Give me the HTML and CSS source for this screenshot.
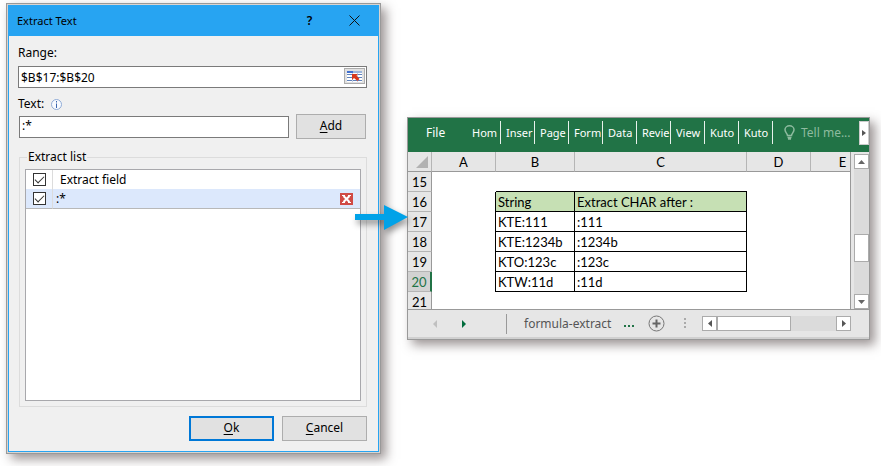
FILE: index.html
```
<!DOCTYPE html>
<html lang="en">
<head>
  <meta charset="UTF-8">
  <meta name="viewport" content="width=device-width, initial-scale=1.0">
  <title>Extract Text</title>
  <link rel="stylesheet" href="styles.css">
</head>
<body>
  <main class="page">
    <form class="dialog">
      <header class="titlebar">
        <h1>Extract Text</h1>
        <button type="button" class="title-btn help">?</button>
        <button type="button" class="title-btn" aria-label="Close">
          <svg width="11" height="11" viewBox="0 0 11 11"><path d="M.5.5l10 10M10.5.5l-10 10" stroke="#111" fill="none"/></svg>
        </button>
      </header>
      <div class="dialog-body">
        <label class="field-label" for="range">Range:</label>
        <div class="range-box">
          <input type="text" id="range" value="$B$17:$B$20">
          <button type="button" class="pick" aria-label="Select range">
            <svg width="15" height="11" viewBox="0 0 15 11">
              <path fill="#fff" d="M0 0h15v11H0z"/>
              <path fill="#3f6fd0" d="M0 0h6v2H0z"/>
              <path fill="#9db6dc" d="M6 0h9v2H6z"/>
              <path d="M0 3.5h15M0 6.5h15M0 9.5h15" stroke="#5f82bb"/>
              <path d="M5.5 2v9M10.5 2v9" stroke="#c3d0e6"/>
              <path fill="#d8381c" d="M5 3h6L9.500 4.500l3 3.500-2 2-3.500-3L5 9z"/>
            </svg>
          </button>
        </div>
        <div class="field-label text-label">
          <label for="text">Text:</label>
          <svg width="11" height="11" viewBox="0 0 11 11"><circle cx="5.500" cy="5.500" r="5" fill="#f7faff" stroke="#8fabd6"/><path d="M5 2h1v1.500H5zM5 4.500h1V9H5z" fill="#3c66ae"/></svg>
        </div>
        <div class="text-row">
          <input type="text" id="text" value=":*">
          <button type="button" class="btn add"><u>A</u>dd</button>
        </div>
        <fieldset class="group">
          <legend>Extract list</legend>
          <div class="list">
            <table class="fields">
              <tr>
                <th class="check"><input type="checkbox" aria-label="Select all" checked></th>
                <th class="name">Extract field</th>
                <th class="remove"></th>
              </tr>
              <tr class="selected">
                <td class="check"><input type="checkbox" aria-label="Select :*" checked></td>
                <td class="name">:*</td>
                <td class="remove">
                  <button type="button" aria-label="Remove">
                    <svg width="13" height="12" viewBox="0 0 13 12"><path d="M3.500 3l6 6M9.500 3l-6 6" stroke="#fff" stroke-width="2"/><path d="M2 2.500h3M8 2.500h3M2 9.500h3M8 9.500h3" stroke="#fff"/></svg>
                  </button>
                </td>
              </tr>
            </table>
          </div>
        </fieldset>
        <footer class="actions">
          <button type="button" class="btn primary"><u>O</u>k</button>
          <button type="button" class="btn"><u>C</u>ancel</button>
        </footer>
      </div>
    </form>

    <section class="excel">
      <nav class="ribbon">
        <a class="file" href="#">File</a>
        <a class="tab" href="#"><span>Hom</span></a>
        <a class="tab" href="#"><span>Inser</span></a>
        <a class="tab" href="#"><span>Page</span></a>
        <a class="tab" href="#"><span>Form</span></a>
        <a class="tab" href="#"><span>Data</span></a>
        <a class="tab" href="#"><span>Revie</span></a>
        <a class="tab" href="#"><span>View</span></a>
        <a class="tab" href="#"><span>Kuto</span></a>
        <a class="tab" href="#"><span>Kuto</span></a>
        <a class="tell" href="#">
          <svg width="11" height="15" viewBox="0 0 11 15"><path d="M3.500 10.500C3.500 8.500 1 7.500 1 4.800a4.500 4 0 0 1 9 0c0 2.700-2.500 3.700-2.500 5.700zM3.500 12.500h4M4 14h3" fill="none" stroke="#8ebb9f" stroke-width="1.500"/></svg>
          Tell me...
        </a>
        <button type="button" class="more" aria-label="More tabs"><svg width="4" height="6" viewBox="0 0 4 6"><path d="M0 0l4 3-4 3z" fill="#555"/></svg></button>
      </nav>
      <div class="sheet">
        <div class="grid">
          <table>
            <colgroup><col class="col-n"><col class="col-a"><col class="col-b"><col class="col-c"><col class="col-d"><col class="col-d"></colgroup>
            <tr class="letters"><th class="corner"><svg width="12" height="12" viewBox="0 0 12 12"><path d="M12 0v12H0z" fill="#b2b2b2"/></svg></th><th>A</th><th>B</th><th>C</th><th>D</th><th>E</th></tr>
            <tr class="above"><th>15</th><td></td><td></td><td></td><td></td><td></td></tr>
            <tr class="data head"><th>16</th><td></td><td>String</td><td>Extract CHAR after :</td><td></td><td></td></tr>
            <tr class="data"><th>17</th><td></td><td>KTE:111</td><td>:111</td><td></td><td></td></tr>
            <tr class="data"><th>18</th><td></td><td>KTE:1234b</td><td>:1234b</td><td></td><td></td></tr>
            <tr class="data"><th>19</th><td></td><td>KTO:123c</td><td>:123c</td><td></td><td></td></tr>
            <tr class="data"><th class="current">20</th><td></td><td>KTW:11d</td><td>:11d</td><td></td><td></td></tr>
            <tr><th>21</th><td></td><td></td><td></td><td></td><td></td></tr>
          </table>
        </div>
        <div class="vscroll">
          <button type="button" aria-label="Scroll up"><svg width="7" height="4" viewBox="0 0 7 4"><path d="M0 4l3.500-4L7 4z" fill="#666"/></svg></button>
          <div class="track"><div class="thumb"></div></div>
          <button type="button" aria-label="Scroll down"><svg width="7" height="4" viewBox="0 0 7 4"><path d="M0 0h7L3.500 4z" fill="#666"/></svg></button>
        </div>
      </div>
      <footer class="sheetbar">
        <div class="arrows">
          <svg width="4" height="8" viewBox="0 0 4 8"><path d="M4 0v8L0 4z" fill="#c0c0c0"/></svg>
          <svg width="4" height="8" viewBox="0 0 4 8"><path d="M0 0v8l4-4z" fill="#006b3c"/></svg>
        </div>
        <a class="sheet-name" href="#">formula-extract</a>
        <svg class="dots" width="11" height="2" viewBox="0 0 11 2"><path d="M0 0h2v2H0zM4 0h2v2H4zM8 0h2v2H8z" fill="#217346"/></svg>
        <svg class="plus" width="17" height="17" viewBox="0 0 17 17"><circle cx="8.500" cy="8.500" r="7.500" fill="none" stroke="#777"/><path d="M8.500 4.500v8M4.500 8.500h8" stroke="#666" stroke-width="2"/></svg>
        <svg class="grip" width="2" height="11" viewBox="0 0 2 11"><path d="M0 0h2v2H0zM0 4h2v2H0zM0 8h2v2H0z" fill="#aaa"/></svg>
        <div class="hscroll">
          <button type="button" aria-label="Scroll left"><svg width="4" height="7" viewBox="0 0 4 7"><path d="M4 0v7L0 3.500z" fill="#555"/></svg></button>
          <div class="thumb"></div>
          <button type="button" aria-label="Scroll right"><svg width="4" height="7" viewBox="0 0 4 7"><path d="M0 0v7l4-3.500z" fill="#555"/></svg></button>
        </div>
      </footer>
    </section>

    <svg class="pointer" width="53" height="26" viewBox="0 0 53 26"><path d="M0 9h29V0l24 12-24 13V15H0z" fill="#00a2e8"/></svg>
  </main>
</body>
</html>
```

FILE: styles.css
```
* {
  box-sizing: border-box;
}

body {
  margin: 0;
  background: #fff;
  color: #000;
  font: 12px/16px "Noto Sans", sans-serif;
}

button,
input {
  margin: 0;
  padding: 0;
  font: inherit;
  color: inherit;
}

button {
  display: flex;
  align-items: center;
  justify-content: center;
}

a {
  color: inherit;
  text-decoration: none;
}

table {
  border-spacing: 0;
  table-layout: fixed;
}

th,
td {
  padding: 0;
  font-weight: normal;
}

.page {
  position: relative;
  display: flex;
  align-items: flex-start;
  gap: 26px;
  padding: 3px 11px 12px 6px;
}

/* Dialog */
.dialog {
  flex: 0 0 375px;
  border: 1px solid #999;
  padding: 1px;
  background: #d9d4d0;
  box-shadow: 5px 5px 10px rgba(60, 45, 45, 0.5);
}

.titlebar {
  display: flex;
  align-items: center;
  height: 31px;
  padding: 0 2px 0 9px;
  background: #27a4f2;
}

.titlebar h1 {
  flex: 1;
  margin: 0;
  font-size: 11px;
  font-weight: normal;
}

.title-btn {
  width: 45px;
  height: 31px;
  border: 0;
  background: none;
}

.help {
  font-weight: 600;
}

.dialog-body {
  padding: 9px 11px 10px 9px;
  border: 1px solid #27a4f2;
  border-top: 0;
  background: #f0f0f0;
}

.field-label {
  display: block;
  height: 21px;
}

.range-box {
  display: flex;
  align-items: flex-start;
  height: 22px;
  padding: 1px;
  border: 1px solid #7a7a7a;
  background: #fff;
}

.range-box input {
  flex: 1;
  min-width: 0;
  height: 18px;
  padding-left: 1px;
  border: 0;
}

.pick {
  width: 21px;
  height: 16px;
  border: 1px solid #adadad;
  background: #e1e1e1;
}

.text-label {
  display: flex;
  align-items: center;
  gap: 7px;
  height: 16px;
  margin: 8px 0 2px;
}

.text-row {
  display: flex;
  align-items: center;
  gap: 7px;
  padding: 0 1px;
}

.text-row input {
  flex: 1;
  min-width: 0;
  height: 22px;
  padding: 0 2px 2px;
  border: 1px solid #7a7a7a;
}

.btn {
  width: 85px;
  height: 25px;
  padding-bottom: 1px;
  border: 1px solid #adadad;
  background: #e1e1e1;
}

.btn u {
  text-underline-offset: 2px;
}

.add {
  width: 70px;
}

.group {
  min-width: 0;
  margin: 10px 0 9px 1px;
  padding: 4px 5px 5px;
  border: 1px solid #dcdcdc;
}

.group legend {
  margin-left: 2px;
  padding: 0 1px;
}

.list {
  height: 232px;
  border: 1px solid #a8a8ac;
  background: #fff;
}

.fields {
  width: 100%;
}

.fields tr {
  height: 19px;
}

.fields .selected {
  height: 20px;
}

.fields .check {
  width: 27px;
  border-right: 1px solid #dcdcdc;
}

.fields .name {
  padding-left: 7px;
  text-align: left;
}

.fields .remove {
  width: 20px;
}

.selected td {
  border-bottom: 1px solid #b8b8b8;
  background: #dce8fc;
}

.fields .selected .name {
  padding-left: 3px;
}

.check input {
  appearance: none;
  display: block;
  width: 13px;
  height: 13px;
  margin: 0 auto;
  border: 1px solid #333;
  background: #fff;
}

.check input:checked::before {
  content: "";
  display: block;
  width: 8px;
  height: 4px;
  margin: 2px 1px;
  border: solid #333;
  border-width: 0 0 1px 1px;
  transform: rotate(-45deg);
}

.remove button {
  width: 13px;
  height: 12px;
  border: 0;
  background: #d04a45;
}

.actions {
  display: flex;
  justify-content: flex-end;
  gap: 8px;
}

.primary {
  border: 2px solid #0078d7;
}

/* Spreadsheet window */
.excel {
  flex: 1;
  min-width: 0;
  margin-top: 114px;
  border: 1px solid #999;
  background: #e6e6e6;
  box-shadow: 5px 5px 10px rgba(60, 45, 45, 0.5);
}

.ribbon {
  display: flex;
  align-items: flex-start;
  height: 34px;
  padding-top: 3px;
  background: #217346;
  color: #fff;
  line-height: 23px;
}

.file {
  width: 59px;
  padding-left: 18px;
}

.tab {
  flex: none;
  width: 34px;
  height: 23px;
  padding-left: 5px;
  border-right: 1px solid #e8f1ec;
  font-size: 11px;
}

.tab span {
  display: block;
  overflow: hidden;
}

.tell {
  flex: 1;
  display: flex;
  align-items: center;
  gap: 6px;
  padding-left: 11px;
  color: #8ebb9f;
  white-space: nowrap;
}

.more {
  width: 10px;
  height: 24px;
  border: 1px solid #ccc;
  background: #fff;
}

.sheet {
  display: flex;
  height: 158px;
  border-bottom: 1px solid #999;
}

.grid {
  flex: 1;
  min-width: 0;
  overflow: hidden;
  border-right: 1px solid #999;
  background: #fff;
  font: 13px/18px Lato, sans-serif;
}

.grid table {
  width: 467px;
}

.col-n {
  width: 24px;
}

.col-a {
  width: 64px;
}

.col-b {
  width: 79px;
}

.col-c {
  width: 172px;
}

.col-d {
  width: 64px;
}

.grid th,
.grid td {
  padding-top: 1px;
}

.grid th {
  height: 20px;
  border-right: 1px solid #999;
  border-bottom: 1px solid #b5b5b5;
  background: #e6e6e6;
}

.grid .letters th {
  border-right-color: #b5b5b5;
  border-bottom-color: #999;
}

.corner svg {
  display: block;
  margin-left: 8px;
}

.grid .current {
  border-right: 2px solid #217346;
  background: #d2d2d2;
  color: #217346;
}

.data td:nth-child(n+2):nth-child(-n+4) {
  border-right: 1px solid #000;
}

.data td:nth-child(3),
.data td:nth-child(4),
.above td:nth-child(3),
.above td:nth-child(4) {
  padding-left: 2px;
  border-bottom: 1px solid #000;
}

.head td:nth-child(3),
.head td:nth-child(4) {
  background: #c6e0b4;
}

.vscroll {
  display: flex;
  flex-direction: column;
  width: 18px;
  padding: 2px 0 0 3px;
}

.vscroll button,
.hscroll button {
  flex: none;
  width: 15px;
  height: 15px;
  border: 1px solid #ababab;
  background: #fff;
}

.track {
  flex: 1;
  padding-top: 65px;
  background: #dbdbdb;
}

.thumb {
  border: 1px solid #ababab;
  background: #fff;
}

.track .thumb {
  height: 28px;
}

.sheetbar {
  display: flex;
  align-items: center;
  height: 29px;
  padding-right: 18px;
  border-bottom: 2px solid #d0d0d0;
  color: #555;
}

.arrows {
  display: flex;
  align-items: center;
  gap: 25px;
  width: 99px;
  height: 20px;
  padding-left: 25px;
  border-right: 1px solid #999;
}

.sheet-name {
  margin-left: 17px;
}

.dots {
  margin: 5px 13px 0;
}

.grip {
  margin: 0 16px 0 19px;
}

.hscroll {
  flex: 1;
  display: flex;
  justify-content: space-between;
  background: #dbdbdb;
}

.hscroll .thumb {
  width: 74px;
  margin-right: auto;
}

/* Arrow from the dialog to the result */
.pointer {
  position: absolute;
  top: 205px;
  left: 355px;
  filter: drop-shadow(2px 4px 3px rgba(0, 0, 0, 0.4));
}
```
